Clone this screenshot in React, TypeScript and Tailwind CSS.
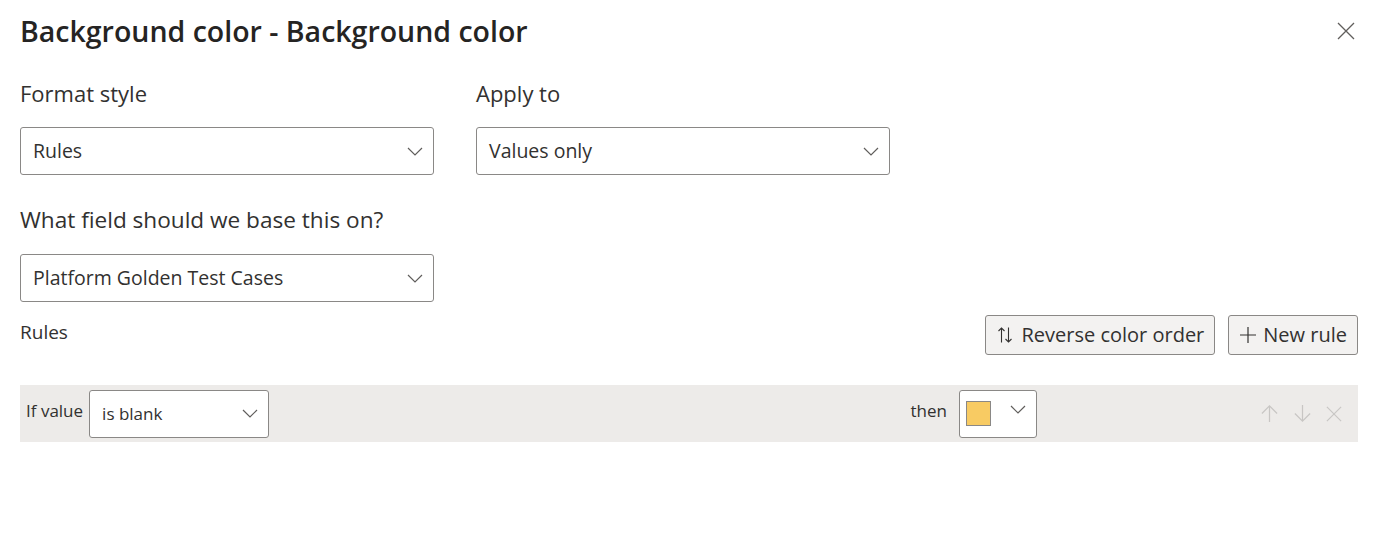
const font = { fontFamily: '"Segoe UI", "Open Sans", sans-serif' };

function Chevron({ className = "" }: { className?: string }) {
  return (
    <svg viewBox="0 0 16 9" className={className} fill="none" stroke="#605e5c" strokeWidth="1.2">
      <path d="M1 1l7 7 7-7" />
    </svg>
  );
}

function Select({ value, className = "", textClass = "text-[19.5px]" }: { value: string; className?: string; textClass?: string }) {
  return (
    <div className={`h-12 flex items-center justify-between pl-3 pr-2.5 bg-white border border-[#8a8886] rounded-[3px] ${className}`}>
      <span className={`${textClass} text-[#323130]`}>{value}</span>
      <Chevron className="w-4 h-[9px]" />
    </div>
  );
}

function ArrowIcon({ dir }: { dir: "up" | "down" }) {
  return (
    <svg viewBox="0 0 20 20" className="w-[19px] h-[19px]" fill="none" stroke="#c8c6c4" strokeWidth="1.3">
      {dir === "up" ? <path d="M10 19V2M2 10l8-8 8 8" /> : <path d="M10 1v17M2 10l8 8 8-8" />}
    </svg>
  );
}

function Cross({ className = "", color }: { className?: string; color: string }) {
  return (
    <svg viewBox="0 0 18 18" className={className} fill="none" stroke={color} strokeWidth="1.3">
      <path d="M1 1l16 16M17 1L1 17" />
    </svg>
  );
}

export default function App() {
  return (
    <div className="w-[1386px] h-[547px] bg-white text-[#252423] px-5 pt-2" style={font}>
      <div className="flex items-center justify-between h-[46px]">
        <h1 className="text-[28.5px] font-semibold">Background color - Background color</h1>
        <Cross className="w-[18px] h-[18px] mr-[11px]" color="#605e5c" />
      </div>

      <div className="flex gap-[42px] mt-[23px]">
        <div className="w-[414px]">
          <div className="text-[22px] text-[#323130] h-8 leading-8">Format style</div>
          <Select value="Rules" className="mt-[18px]" />
        </div>
        <div className="w-[414px]">
          <div className="text-[22px] text-[#323130] h-8 leading-8">Apply to</div>
          <Select value="Values only" className="mt-[18px]" />
        </div>
      </div>

      <div className="w-[414px] mt-[29px]">
        <div className="text-[22.6px] text-[#323130] h-8 leading-8">What field should we base this on?</div>
        <Select value="Platform Golden Test Cases" className="mt-[18px]" />
      </div>

      <div className="flex items-start justify-between mt-[13px] mr-[8px]">
        <div className="text-[19px] text-[#323130] mt-[3px]">Rules</div>
        <div className="flex gap-[13px]">
          <button className="h-10 pl-[12px] pr-2.5 flex items-center gap-[9px] bg-[#f3f2f1] border border-[#8a8886] rounded-[3px] text-[20px] text-[#323130]">
            <svg viewBox="0 0 14 16" className="w-[14px] h-4" fill="none" stroke="#323130" strokeWidth="1.1">
              <path d="M3.5 15.5V1M0.5 4l3-3 3 3M10.5 0.5V15M7.5 12l3 3 3-3" />
            </svg>
            Reverse color order
          </button>
          <button className="h-10 px-2.5 flex items-center gap-1.5 bg-[#f3f2f1] border border-[#8a8886] rounded-[3px] text-[20px] text-[#323130]">
            <svg viewBox="0 0 18 18" className="w-[18px] h-[18px]" fill="none" stroke="#323130" strokeWidth="1.2">
              <path d="M9 1v16M1 9h16" />
            </svg>
            New rule
          </button>
        </div>
      </div>

      <div className="mt-[30px] mr-[8px] h-[57px] bg-[#edebe9] flex items-center pl-1.5 pr-4">
        <span className="text-[17px] text-[#323130] -mt-[6px]">If value</span>
        <Select value="is blank" className="w-[180px] ml-[6px] pl-[12px]" textClass="text-[17px]" />
        <div className="flex-1" />
        <span className="text-[17px] text-[#323130] -mt-[6px]">then</span>
        <div className="ml-3 w-[78px] h-12 bg-white border border-[#8a8886] rounded-[3px] flex items-start justify-between pl-[6px] pr-2.5 pt-[10px]">
          <div className="w-[25px] h-[25px] bg-[#f8cb63] border border-[#8a8886]" />
          <Chevron className="w-4 h-[9px] mt-[4px]" />
        </div>
        <div className="w-[223px]" />
        <div className="flex items-center gap-[14px]">
          <ArrowIcon dir="up" />
          <ArrowIcon dir="down" />
          <Cross className="w-4 h-4" color="#c8c6c4" />
        </div>
      </div>
    </div>
  );
}
